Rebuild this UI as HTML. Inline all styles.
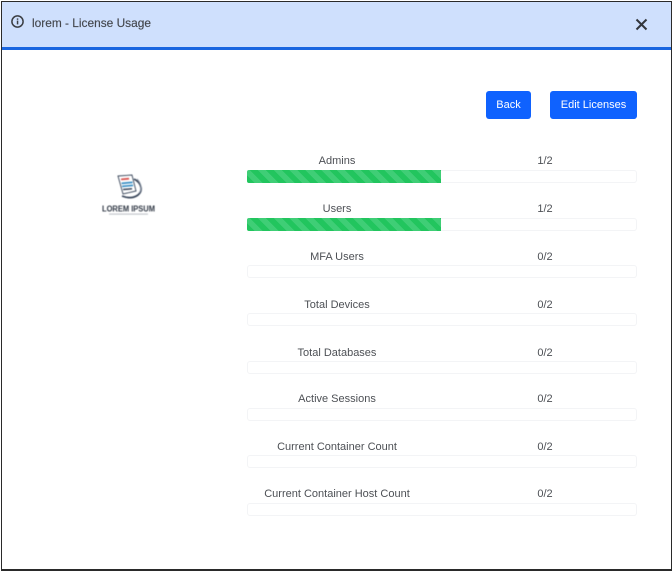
<!DOCTYPE html>
<html>
<head>
<meta charset="utf-8">
<style>
html,body{margin:0;padding:0;background:#fff;}
body{width:672px;height:571px;position:relative;overflow:hidden;font-family:"Liberation Sans",sans-serif;color:#4a4d52;}
.frame{position:absolute;left:0;top:0;width:669px;height:567px;border:1px solid #2a2a2a;border-bottom-width:2px;margin:1px 0 0 1px;pointer-events:none;z-index:5;}
.head{position:absolute;left:1px;top:1px;width:670px;height:46px;background:#cfe0fd;border-bottom:3px solid #1a66e0;}
.title{position:absolute;left:32px;top:16px;font-size:11.9px;line-height:15px;color:#44474d;white-space:nowrap;-webkit-text-stroke:0.15px #44474d;}
.btn{position:absolute;top:91px;height:28px;background:#0f62fe;border-radius:3px;color:#fff;font-size:11px;line-height:28px;text-align:center;}
.lab{position:absolute;font-size:11px;line-height:14px;text-align:center;color:#4d5055;white-space:nowrap;}
.bar{position:absolute;left:247px;width:388px;height:11px;border:1px solid #f3f4f6;border-radius:3px;background:#fff;}
.fill{position:absolute;left:247px;width:194px;height:13px;border-radius:2px 0 0 2px;background:repeating-linear-gradient(45deg,#22c55e 0,#22c55e 5.6px,#3fce76 5.6px,#3fce76 11.2px);}
</style>
</head>
<body>
<div class="head"></div>
<svg style="position:absolute;left:9.5px;top:14px" width="15" height="15" viewBox="0 0 15 15"><circle cx="7.5" cy="7.5" r="5.6" fill="none" stroke="#3c3f44" stroke-width="1.5"/><rect x="6.8" y="6.6" width="1.5" height="3.8" fill="#3c3f44"/><rect x="6.8" y="4.4" width="1.5" height="1.4" fill="#3c3f44"/></svg>
<div class="title">lorem - License Usage</div>
<svg style="position:absolute;left:635px;top:18px" width="13" height="13" viewBox="0 0 13 13"><path d="M1.5 1.5L11.5 11.5M11.5 1.5L1.5 11.5" stroke="#33363b" stroke-width="2" fill="none"/></svg>

<div class="btn" style="left:486px;width:45px;">Back</div>
<div class="btn" style="left:550px;width:87px;">Edit Licenses</div>

<svg style="position:absolute;left:95px;top:170px;filter:blur(0.4px)" width="65" height="50" viewBox="0 0 65 50">
<path d="M23 6L37 5L41 21L28 24Z" fill="#fff" stroke="#39465a" stroke-width="0.9"/>
<rect x="26" y="8.5" width="8" height="1.8" fill="#d9534f" transform="rotate(-5 26 8.5)"/>
<rect x="26.5" y="12.5" width="11" height="1.7" fill="#3a8fc4" transform="rotate(-5 26.5 12.5)"/>
<rect x="27" y="15.5" width="11" height="1.7" fill="#3a8fc4" transform="rotate(-5 27 15.5)"/>
<rect x="28" y="18.8" width="9" height="1.5" fill="#39465a" transform="rotate(-5 28 18.8)"/>
<path d="M39 9C47 13 48 21 43 25C38 28.500 32 28 27 26" fill="none" stroke="#39465a" stroke-width="1.7"/>
<path d="M42 9C47 14 47 20 44 23" fill="none" stroke="#8a94a3" stroke-width="1"/>
<text x="33.500" y="41.500" text-anchor="middle" font-family="Liberation Sans, sans-serif" font-size="8" font-weight="700" fill="#2e3643" textLength="53" lengthAdjust="spacingAndGlyphs">LOREM IPSUM</text>
<rect x="14" y="43.500" width="39" height="1.2" fill="#c4c7cc"/>
</svg>

<div class="lab" style="left:237px;width:200px;top:154px;">Admins</div><div class="lab" style="left:505px;width:80px;top:154px;">1/2</div>
<div class="bar" style="top:170px;"></div><div class="fill" style="top:170px;"></div>

<div class="lab" style="left:237px;width:200px;top:202px;">Users</div><div class="lab" style="left:505px;width:80px;top:202px;">1/2</div>
<div class="bar" style="top:218px;"></div><div class="fill" style="top:218px;"></div>

<div class="lab" style="left:237px;width:200px;top:250px;">MFA Users</div><div class="lab" style="left:505px;width:80px;top:250px;">0/2</div>
<div class="bar" style="top:265px;"></div>

<div class="lab" style="left:237px;width:200px;top:298px;">Total Devices</div><div class="lab" style="left:505px;width:80px;top:298px;">0/2</div>
<div class="bar" style="top:313px;"></div>

<div class="lab" style="left:237px;width:200px;top:346px;">Total Databases</div><div class="lab" style="left:505px;width:80px;top:346px;">0/2</div>
<div class="bar" style="top:361px;"></div>

<div class="lab" style="left:237px;width:200px;top:392px;">Active Sessions</div><div class="lab" style="left:505px;width:80px;top:392px;">0/2</div>
<div class="bar" style="top:408px;"></div>

<div class="lab" style="left:237px;width:200px;top:440px;">Current Container Count</div><div class="lab" style="left:505px;width:80px;top:440px;">0/2</div>
<div class="bar" style="top:455px;"></div>

<div class="lab" style="left:237px;width:200px;top:487px;">Current Container Host Count</div><div class="lab" style="left:505px;width:80px;top:487px;">0/2</div>
<div class="bar" style="top:503px;"></div>

<div class="frame"></div>
</body>
</html>
